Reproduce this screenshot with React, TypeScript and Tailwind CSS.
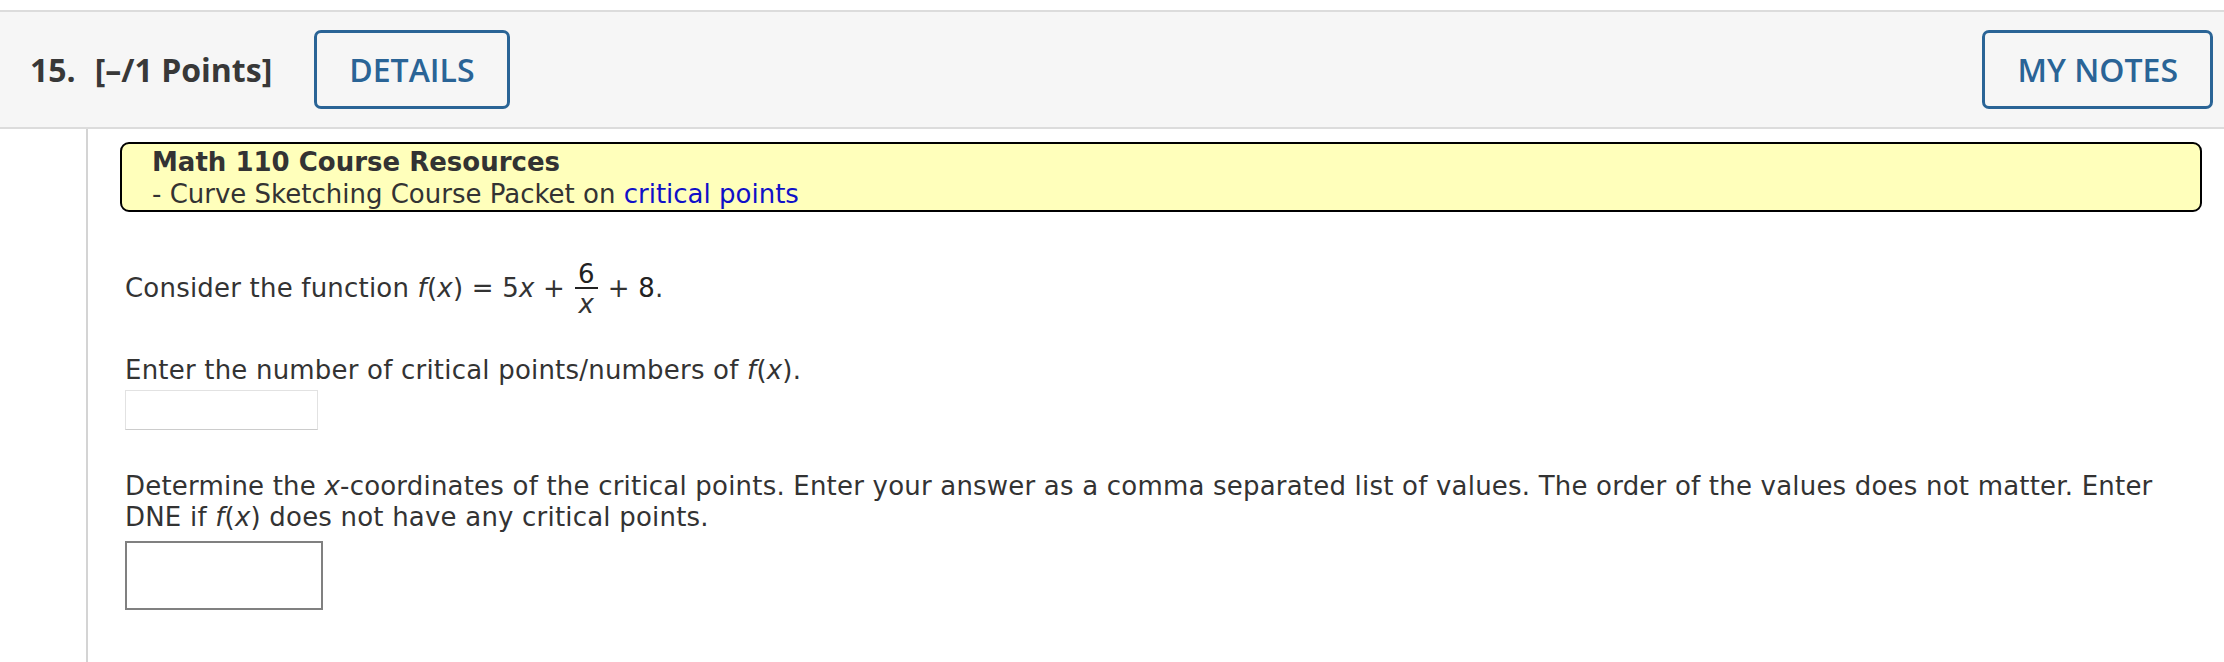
import type { ReactNode } from 'react'

function HeaderButton({ children }: { children: ReactNode }) {
  return (
    <button className="h-[79px] px-[32px] border-[3px] border-[#2a6496] rounded-[7px] bg-transparent text-[#2a6496] text-[32px] font-semibold leading-none tracking-normal">
      {children}
    </button>
  )
}

function Frac({ num, den }: { num: ReactNode; den: ReactNode }) {
  return (
    <span className="inline-flex flex-col items-center align-middle mx-[10px]">
      <span className="leading-[26px] px-[3px] border-b-2 border-[#222] text-[#222]">{num}</span>
      <span className="leading-[26px] pt-[2px]">{den}</span>
    </span>
  )
}

export default function App() {
  return (
    <div className="w-[2224px] h-[662px] bg-white pt-[10px] overflow-hidden flex flex-col">
      <div className="flex items-center h-[119px] shrink-0 border-y-2 border-[#dcdcdc] bg-[#f6f6f6] pl-[30px] pr-[11px] font-['Open_Sans',sans-serif] text-[#383838]">
        <span className="text-[32px] font-bold">15.</span>
        <span className="text-[32px] font-bold ml-[19px]">[–/1 Points]</span>
        <div className="ml-[42px]">
          <HeaderButton>DETAILS</HeaderButton>
        </div>
        <div className="ml-auto">
          <HeaderButton>MY NOTES</HeaderButton>
        </div>
      </div>

      <div className="flex flex-1 font-['DejaVu_Sans',sans-serif] text-[26px] text-[#333]">
        <div className="w-[88px] shrink-0 border-r-2 border-[#d4d4d4]" />
        <div className="flex-1 pl-[32px] pr-[22px] pt-[13px]">
          <div className="border-2 border-black rounded-[9px] bg-[#ffffbb] pl-[30px] pt-[2px] h-[70px] leading-[32px]">
            <div className="font-bold">Math 110 Course Resources</div>
            <div>
              - Curve Sketching Course Packet on{' '}
              <a className="text-[#1010c8]">critical points</a>
            </div>
          </div>

          <div className="pl-[5px] pr-[30px] leading-[31px] tracking-[0.2px]">
            <p className="mt-[49px]">
              Consider the function <i>f</i>(<i>x</i>) = 5<i>x</i> +
              <Frac num="6" den={<i>x</i>} />+ <span className="text-[#222]">8</span>.
            </p>

            <p className="mt-[38px]">
              Enter the number of critical points/numbers of <i>f</i>(<i>x</i>).
            </p>
            <input
              type="text"
              className="block mt-[4px] w-[193px] h-[40px] border border-[#e2e2e2] border-b-[#cccccc] bg-white"
            />

            <p className="mt-[41px]">
              Determine the <i>x</i>-coordinates of the critical points. Enter your answer as a comma separated list of values. The order of the values does not matter. Enter DNE if <i>f</i>(<i>x</i>) does not have any critical points.
            </p>
            <input
              type="text"
              className="block mt-[8px] w-[198px] h-[69px] border-2 border-[#808080] bg-white"
            />
          </div>
        </div>
      </div>
    </div>
  )
}
